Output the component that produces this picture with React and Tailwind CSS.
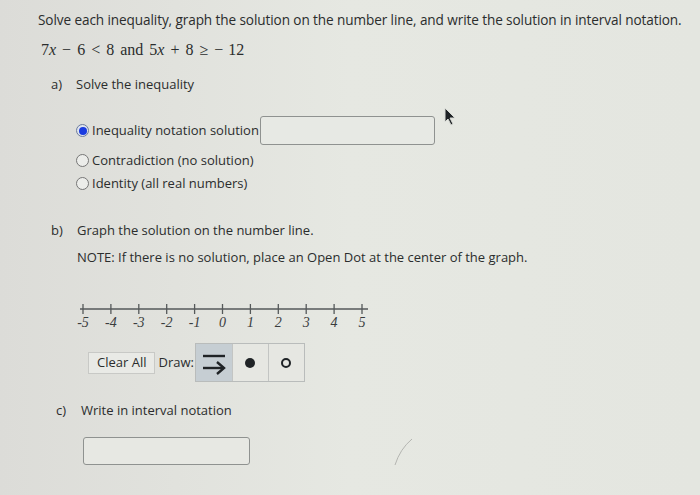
import React from "react";

const ticks = [-5, -4, -3, -2, -1, 0, 1, 2, 3, 4, 5];

function NumberLine() {
  return (
    <svg width="310" height="36" viewBox="0 0 310 36" className="block">
      <line x1="5" y1="10" x2="293" y2="10" stroke="#55595a" strokeWidth="1.6" />
      {ticks.map((t, i) => {
        const x = 8 + i * 27.9;
        return (
          <g key={t}>
            <line x1={x} y1="5" x2={x} y2="15" stroke="#55595a" strokeWidth="1.3" />
            <text
              x={x}
              y="28"
              textAnchor="middle"
              fontFamily="'Liberation Serif', serif"
              fontStyle="italic"
              fontSize="14"
              fill="#3a3d3e"
            >
              {t}
            </text>
          </g>
        );
      })}
    </svg>
  );
}

function Radio({ checked, children }) {
  return (
    <label className="flex items-center gap-[3px]">
      <span
        className={
          checked
            ? "w-[13px] h-[13px] rounded-full border border-[#6d7c9c] bg-[#dfe4ee] flex items-center justify-center"
            : "w-[13px] h-[13px] rounded-full border border-[#767676] bg-[#ecedea]"
        }
      >
        {checked && <span className="w-[8px] h-[8px] rounded-full bg-[#1a3be0]" />}
      </span>
      <span>{children}</span>
    </label>
  );
}

export default function App() {
  return (
    <div
      className="relative w-[700px] h-[495px] overflow-hidden bg-gradient-to-r from-[#dcdcd8] via-[#e6e8e2] to-[#e4e6e0] text-[#2b2d2d]"
      style={{ fontFamily: "'Open Sans', 'DejaVu Sans', sans-serif" }}
    >
      <div className="pl-[38px] pt-[11px]">
        {/* Enunciado */}
        <p className="text-[13.6px] leading-[18px] tracking-[-0.1px]">
          Solve each inequality, graph the solution on the number line, and write the solution in interval notation.
        </p>
        <p
          className="mt-[12px] ml-[3px] text-[16px] leading-[18px]"
          style={{ fontFamily: "'Liberation Serif', serif" }}
        >
          7<i>x</i>
          <span className="mx-[6px]">−</span>6
          <span className="mx-[6px]">&lt;</span>8
          <span className="mx-[6px]">and</span>5<i>x</i>
          <span className="mx-[6px]">+</span>8
          <span className="mx-[6px]">≥</span>
          <span className="mr-[5px]">−</span>12
        </p>

        {/* a) */}
        <div className="mt-[17px] flex text-[13px] leading-[17px]">
          <span className="w-[25px] ml-[13px]">a)</span>
          <span>Solve the inequality</span>
        </div>

        <div className="mt-[23px] ml-[38px] flex flex-col text-[13px] leading-[17px]">
          <div className="flex items-center">
            <Radio checked>Inequality notation solution</Radio>
            <div className="ml-[1px] w-[175px] h-[29px] rounded-[3px] border border-[#8f9290] bg-[#e7e9e4]" />
          </div>
          <div className="mt-[7px]">
            <Radio>Contradiction (no solution)</Radio>
          </div>
          <div className="mt-[6px]">
            <Radio>Identity (all real numbers)</Radio>
          </div>
        </div>

        {/* b) */}
        <div className="mt-[30px] flex text-[13px] leading-[17px]">
          <span className="w-[26px] ml-[13px]">b)</span>
          <span>Graph the solution on the number line.</span>
        </div>
        <p className="mt-[10px] ml-[39px] text-[13px] leading-[17px]">
          NOTE: If there is no solution, place an Open Dot at the center of the graph.
        </p>

        <div className="mt-[33px] ml-[37px]">
          <NumberLine />
        </div>

        <div className="mt-[8px] ml-[50px] flex items-center text-[13px]">
          <button className="h-[22px] px-[8px] border border-[#c8c9c6] bg-[#e9eae6] text-[#2b2d2d]">
            Clear All
          </button>
          <span className="ml-[3px] mr-[1px]">Draw:</span>
          <div className="flex border border-[#b9bcbb]">
            <div className="w-[36px] h-[37px] bg-[#c6ced3] flex items-center justify-center">
              <svg width="26" height="26" viewBox="0 0 26 26">
                <line x1="2" y1="6" x2="24" y2="6" stroke="#1f2326" strokeWidth="2.4" />
                <line x1="2" y1="18" x2="22" y2="18" stroke="#1f2326" strokeWidth="2.4" />
                <path d="M16 12 L23 18 L16 24" fill="none" stroke="#1f2326" strokeWidth="2.4" />
              </svg>
            </div>
            <div className="w-[36px] h-[37px] border-l border-[#c3c5c3] bg-[#e6e7e2] flex items-center justify-center">
              <span className="w-[10px] h-[10px] rounded-full bg-[#1f2326]" />
            </div>
            <div className="w-[36px] h-[37px] border-l border-[#c3c5c3] bg-[#e6e7e2] flex items-center justify-center">
              <span className="w-[10px] h-[10px] rounded-full border-2 border-[#1f2326]" />
            </div>
          </div>
        </div>

        {/* c) */}
        <div className="mt-[20px] flex text-[13px] leading-[17px]">
          <span className="w-[25px] ml-[18px]">c)</span>
          <span>Write in interval notation</span>
        </div>
        <div className="mt-[18px] ml-[45px] w-[167px] h-[28px] rounded-[3px] border border-[#8f9290] bg-[#e7e8e3]" />
      </div>

      {/* Cursor del ratón */}
      <svg
        className="absolute left-[443px] top-[107px]"
        width="14"
        height="20"
        viewBox="0 0 14 20"
      >
        <path d="M2 1 L2 15 L5 12 L8 18 L10 17 L7 11 L12 11 Z" fill="#1f2326" stroke="#d9dbd6" strokeWidth="1" />
      </svg>

      {/* Marca en la pantalla */}
      <svg className="absolute left-[390px] top-[435px]" width="30" height="35" viewBox="0 0 30 35">
        <path d="M22 4 Q10 14 5 30" fill="none" stroke="#b4b5b1" strokeWidth="1" />
      </svg>
    </div>
  );
}
